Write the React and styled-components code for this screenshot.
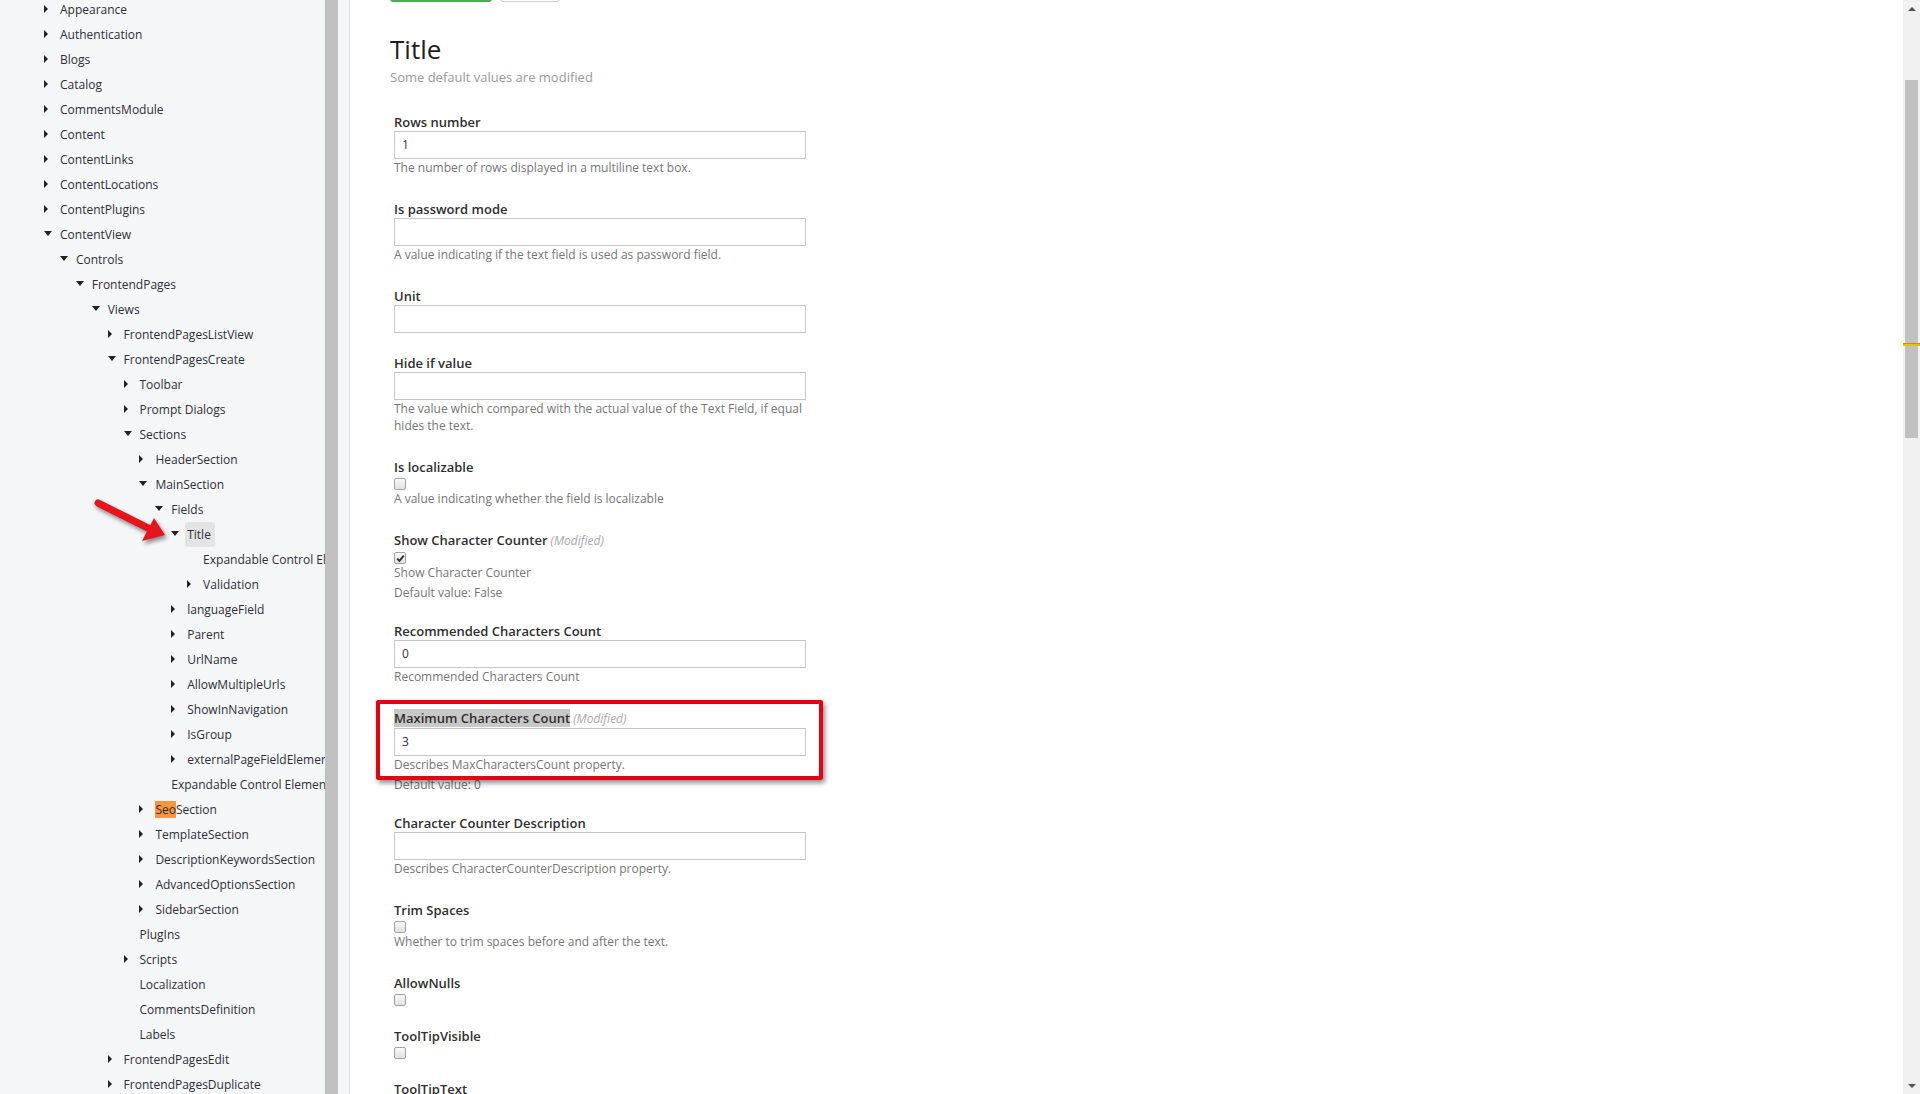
import React from 'react';
import styled, { createGlobalStyle } from 'styled-components';

const GlobalStyle = createGlobalStyle`
  html, body {
    margin: 0;
    padding: 0;
    height: 100%;
    overflow: hidden;
  }
  body {
    font-family: 'Open Sans', 'Liberation Sans', sans-serif;
    color: #333;
    background: #fff;
  }
  * {
    box-sizing: border-box;
  }
`;

const Page = styled.div`
  display: flex;
  width: 100vw;
  height: 100vh;
  overflow: hidden;
`;

const Sidebar = styled.div`
  position: relative;
  width: 325px;
  flex-shrink: 0;
  height: 100%;
  overflow: hidden;
  background: #f5f6f8;
`;

const TreeList = styled.ul`
  list-style: none;
  margin: -3px 0 0;
  padding: 0;
`;

const TreeRow = styled.li`
  display: flex;
  align-items: center;
  height: 25px;
  padding-left: ${(p) => 44 + p.$level * 15.9}px;
  white-space: nowrap;
  font-size: 12px;
  color: #2e2e38;
`;

const Toggle = styled.span`
  width: 16px;
  flex-shrink: 0;
  display: flex;
  align-items: center;
  height: 100%;
  &::before {
    content: '';
    display: ${(p) => (p.$kind === 'leaf' ? 'none' : 'block')};
    width: 0;
    height: 0;
    margin-top: -2px;
    ${(p) =>
      p.$kind === 'open'
        ? `border-top: 5px solid #222; border-left: 4px solid transparent; border-right: 4px solid transparent;`
        : `border-left: 4px solid #222; border-top: 4px solid transparent; border-bottom: 4px solid transparent;`}
  }
`;

const NodeLabel = styled.span`
  display: inline-flex;
  align-items: center;
  height: 25px;
  ${(p) =>
    p.$selected &&
    `background: #e4e4e4; border-radius: 3px; padding: 0 4px 0 2px; margin-left: -2px;`}
`;

const SearchHit = styled.span`
  background: #f7963c;
`;

const Arrow = styled.svg`
  position: absolute;
  left: 90px;
  top: 495px;
  overflow: visible;
  filter: drop-shadow(2px 3px 2px rgba(0, 0, 0, 0.45));
`;

const Splitter = styled.div`
  width: 13px;
  flex-shrink: 0;
  background: #c1c1c1;
`;

const Gutter = styled.div`
  width: 12px;
  flex-shrink: 0;
  background: #f5f6f8;
  border-right: 1px solid #e2e2e2;
`;

const Main = styled.div`
  flex: 1;
  height: 100%;
  overflow: hidden;
  padding-left: 40px;
`;

const ButtonRow = styled.div`
  display: flex;
  gap: 8px;
  margin-top: -28px;
`;

const SaveButton = styled.button`
  width: 102px;
  height: 30px;
  border: none;
  border-radius: 3px;
  background: #4cae50;
`;

const CancelButton = styled.button`
  width: 60px;
  height: 30px;
  border: 1px solid #cfcfcf;
  border-radius: 3px;
  background: #fff;
`;

const Heading = styled.h1`
  margin: 32px 0 0;
  font-size: 26px;
  line-height: 31px;
  font-weight: 400;
  color: #1e1e1e;
`;

const SubTitle = styled.div`
  margin-top: 3px;
  font-size: 13px;
  line-height: 18px;
  color: #9a9a9a;
`;

const FieldList = styled.div`
  margin-top: 27px;
  padding-left: 4px;
`;

const Field = styled.div`
  position: relative;
  width: 412px;
  margin-bottom: ${(p) => p.$gap}px;
`;

const Label = styled.div`
  font-size: 13px;
  line-height: 18px;
  font-weight: 600;
  color: #2f2f2f;
  white-space: nowrap;
`;

const LabelText = styled.span`
  ${(p) => p.$marked && `background: #c8c8c8;`}
`;

const Modified = styled.em`
  font-weight: 400;
  font-size: 12px;
  color: #a8a8a8;
  margin-left: 3px;
`;

const TextInput = styled.div`
  height: 28px;
  border: 1px solid #c8c8c8;
  background: #fff;
  padding: 0 7px;
  font-size: 12px;
  line-height: 26px;
  color: #333;
`;

const CheckRow = styled.div`
  height: 14px;
  padding-top: 2px;
`;

const CheckBox = styled.span`
  display: block;
  width: 12px;
  height: 12px;
  border: 1px solid #a3a3a3;
  border-radius: 2px;
  background: linear-gradient(#f8f8f8, #e1e1e1);
  position: relative;
  svg {
    position: absolute;
    left: 1px;
    top: 1px;
  }
`;

const Help = styled.div`
  font-size: 12px;
  line-height: 17px;
  color: #767676;
  white-space: nowrap;
`;

const DefaultValue = styled(Help)`
  margin-top: 3px;
`;

const Marker = styled.div`
  position: absolute;
  left: -18px;
  top: -9px;
  width: 447px;
  height: 80px;
  border: 4px solid #e60012;
  border-radius: 2px;
  box-shadow: 2px 3px 5px rgba(0, 0, 0, 0.45);
  pointer-events: none;
`;

const ScrollTrack = styled.div`
  position: relative;
  width: 17px;
  flex-shrink: 0;
  height: 100%;
  background: #f1f1f1;
  display: flex;
  flex-direction: column;
`;

const ScrollArrow = styled.div`
  height: 17px;
  display: flex;
  align-items: center;
  justify-content: center;
  &::before {
    content: '';
    width: 0;
    height: 0;
    border-left: 4px solid transparent;
    border-right: 4px solid transparent;
    ${(p) =>
      p.$down
        ? `border-top: 4px solid #505050;`
        : `border-bottom: 4px solid #505050;`}
  }
`;

const ScrollThumb = styled.div`
  margin: 63px 2px 0;
  height: 358px;
  background: #c1c1c1;
`;

const ScrollSpacer = styled.div`
  flex: 1;
`;

const FindMark = styled.div`
  position: absolute;
  left: 0;
  right: 0;
  top: 343px;
  height: 3px;
  background: #e6c300;
  border-top: 1px solid #b89a00;
`;

const tree = [
  { name: 'Appearance', level: 0, kind: 'closed' },
  { name: 'Authentication', level: 0, kind: 'closed' },
  { name: 'Blogs', level: 0, kind: 'closed' },
  { name: 'Catalog', level: 0, kind: 'closed' },
  { name: 'CommentsModule', level: 0, kind: 'closed' },
  { name: 'Content', level: 0, kind: 'closed' },
  { name: 'ContentLinks', level: 0, kind: 'closed' },
  { name: 'ContentLocations', level: 0, kind: 'closed' },
  { name: 'ContentPlugins', level: 0, kind: 'closed' },
  { name: 'ContentView', level: 0, kind: 'open' },
  { name: 'Controls', level: 1, kind: 'open' },
  { name: 'FrontendPages', level: 2, kind: 'open' },
  { name: 'Views', level: 3, kind: 'open' },
  { name: 'FrontendPagesListView', level: 4, kind: 'closed' },
  { name: 'FrontendPagesCreate', level: 4, kind: 'open' },
  { name: 'Toolbar', level: 5, kind: 'closed' },
  { name: 'Prompt Dialogs', level: 5, kind: 'closed' },
  { name: 'Sections', level: 5, kind: 'open' },
  { name: 'HeaderSection', level: 6, kind: 'closed' },
  { name: 'MainSection', level: 6, kind: 'open' },
  { name: 'Fields', level: 7, kind: 'open' },
  { name: 'Title', level: 8, kind: 'open', selected: true },
  { name: 'Expandable Control Element', level: 9, kind: 'leaf' },
  { name: 'Validation', level: 9, kind: 'closed' },
  { name: 'languageField', level: 8, kind: 'closed' },
  { name: 'Parent', level: 8, kind: 'closed' },
  { name: 'UrlName', level: 8, kind: 'closed' },
  { name: 'AllowMultipleUrls', level: 8, kind: 'closed' },
  { name: 'ShowInNavigation', level: 8, kind: 'closed' },
  { name: 'IsGroup', level: 8, kind: 'closed' },
  { name: 'externalPageFieldElement', level: 8, kind: 'closed' },
  { name: 'Expandable Control Element', level: 7, kind: 'leaf' },
  { name: 'SeoSection', level: 6, kind: 'closed', hit: 'Seo' },
  { name: 'TemplateSection', level: 6, kind: 'closed' },
  { name: 'DescriptionKeywordsSection', level: 6, kind: 'closed' },
  { name: 'AdvancedOptionsSection', level: 6, kind: 'closed' },
  { name: 'SidebarSection', level: 6, kind: 'closed' },
  { name: 'PlugIns', level: 5, kind: 'leaf' },
  { name: 'Scripts', level: 5, kind: 'closed' },
  { name: 'Localization', level: 5, kind: 'leaf' },
  { name: 'CommentsDefinition', level: 5, kind: 'leaf' },
  { name: 'Labels', level: 5, kind: 'leaf' },
  { name: 'FrontendPagesEdit', level: 4, kind: 'closed' },
  { name: 'FrontendPagesDuplicate', level: 4, kind: 'closed' },
];

const fields = [
  {
    label: 'Rows number',
    input: '1',
    help: ['The number of rows displayed in a multiline text box.'],
  },
  {
    label: 'Is password mode',
    input: '',
    help: ['A value indicating if the text field is used as password field.'],
  },
  { label: 'Unit', input: '' },
  {
    label: 'Hide if value',
    input: '',
    help: [
      'The value which compared with the actual value of the Text Field, if equal',
      'hides the text.',
    ],
  },
  {
    label: 'Is localizable',
    check: false,
    help: ['A value indicating whether the field is localizable'],
  },
  {
    label: 'Show Character Counter',
    modified: true,
    check: true,
    help: ['Show Character Counter'],
    def: 'Default value: False',
  },
  {
    label: 'Recommended Characters Count',
    input: '0',
    help: ['Recommended Characters Count'],
  },
  {
    label: 'Maximum Characters Count',
    modified: true,
    input: '3',
    help: ['Describes MaxCharactersCount property.'],
    def: 'Default value: 0',
    marked: true,
  },
  {
    label: 'Character Counter Description',
    input: '',
    help: ['Describes CharacterCounterDescription property.'],
  },
  {
    label: 'Trim Spaces',
    check: false,
    help: ['Whether to trim spaces before and after the text.'],
  },
  { label: 'AllowNulls', check: false },
  { label: 'ToolTipVisible', check: false },
  { label: 'ToolTipText', input: '' },
];

const TreeNode = ({ node }) => (
  <TreeRow $level={node.level}>
    <Toggle $kind={node.kind} />
    <NodeLabel $selected={node.selected}>
      {node.hit ? (
        <>
          <SearchHit>{node.hit}</SearchHit>
          {node.name.slice(node.hit.length)}
        </>
      ) : (
        node.name
      )}
    </NodeLabel>
  </TreeRow>
);

const PropertyField = ({ field }) => {
  const gap = field.def ? 21 : field.help ? 24 : 21;
  return (
    <Field $gap={gap}>
      <Label>
        <LabelText $marked={field.marked}>{field.label}</LabelText>
        {field.modified && <Modified>(Modified)</Modified>}
      </Label>
      {field.check !== undefined ? (
        <CheckRow>
          <CheckBox>
            {field.check && (
              <svg width="9" height="9" viewBox="0 0 9 9">
                <path
                  d="M1.2 4.6 L3.4 6.8 L7.8 1.6"
                  fill="none"
                  stroke="#2b2b2b"
                  strokeWidth="1.8"
                />
              </svg>
            )}
          </CheckBox>
        </CheckRow>
      ) : (
        <TextInput>{field.input}</TextInput>
      )}
      {field.help && (
        <Help>
          {field.help.map((line, i) => (
            <div key={i}>{line}</div>
          ))}
        </Help>
      )}
      {field.def && <DefaultValue>{field.def}</DefaultValue>}
      {field.marked && <Marker />}
    </Field>
  );
};

const App = () => {
  return (
    <>
      <GlobalStyle />
      <Page>
        <Sidebar>
          <TreeList>
            {tree.map((node, i) => (
              <TreeNode key={`${node.name}_${i}`} node={node} />
            ))}
          </TreeList>
          <Arrow width="80" height="50" viewBox="0 0 80 50">
            <line
              x1="8"
              y1="8"
              x2="58"
              y2="33"
              stroke="#e8141c"
              strokeWidth="7"
              strokeLinecap="round"
            />
            <polygon points="52,46 64,23 75,40" fill="#e8141c" />
          </Arrow>
        </Sidebar>
        <Splitter />
        <Gutter />
        <Main>
          <ButtonRow>
            <SaveButton />
            <CancelButton />
          </ButtonRow>
          <Heading>Title</Heading>
          <SubTitle>Some default values are modified</SubTitle>
          <FieldList>
            {fields.map((field) => (
              <PropertyField key={field.label} field={field} />
            ))}
          </FieldList>
        </Main>
        <ScrollTrack>
          <ScrollArrow />
          <ScrollThumb />
          <ScrollSpacer />
          <ScrollArrow $down />
          <FindMark />
        </ScrollTrack>
      </Page>
    </>
  );
};

export default App;
